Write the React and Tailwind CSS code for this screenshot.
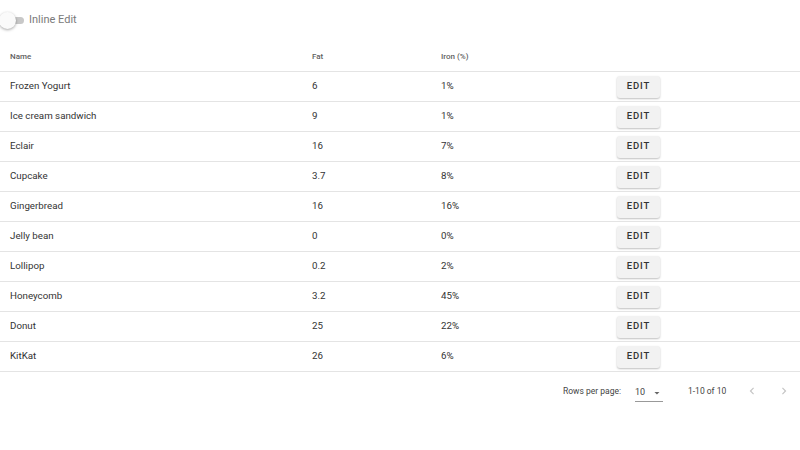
import React, { useState } from "react";

const rows = [
  { name: "Frozen Yogurt", fat: "6", iron: "1%" },
  { name: "Ice cream sandwich", fat: "9", iron: "1%" },
  { name: "Eclair", fat: "16", iron: "7%" },
  { name: "Cupcake", fat: "3.7", iron: "8%" },
  { name: "Gingerbread", fat: "16", iron: "16%" },
  { name: "Jelly bean", fat: "0", iron: "0%" },
  { name: "Lollipop", fat: "0.2", iron: "2%" },
  { name: "Honeycomb", fat: "3.2", iron: "45%" },
  { name: "Donut", fat: "25", iron: "22%" },
  { name: "KitKat", fat: "26", iron: "6%" },
];

const Chevron = ({ dir }) => (
  <svg width="14" height="14" viewBox="0 0 24 24" fill="#c4c4c4">
    {dir === "left" ? (
      <path d="M15.41 7.41 14 6l-6 6 6 6 1.41-1.41L10.83 12z" />
    ) : (
      <path d="M10 6 8.59 7.41 13.17 12l-4.58 4.59L10 18l6-6z" />
    )}
  </svg>
);

export default function App() {
  const [inline, setInline] = useState(false);

  return (
    <div className="w-[800px] h-[450px] bg-white font-['Roboto',sans-serif] text-[#333]">
      {/* toggle */}
      <div className="h-[42px] flex items-center pb-[1px]">
        <button
          onClick={() => setInline(!inline)}
          className="relative w-[27px] h-[18px] flex items-center shrink-0"
        >
          <span className="absolute left-[7px] w-[17px] h-[7px] rounded-full bg-[#c8c8c8]" />
          <span className="absolute left-[-1px] w-[17px] h-[17px] rounded-full bg-[#fafafa] shadow-[0_1px_3px_rgba(0,0,0,0.35)]" />
        </button>
        <span className="ml-[2px] text-[11px] text-[#7a7a7a]">Inline Edit</span>
      </div>

      {/* header */}
      <div className="h-[30px] flex items-center border-b border-[#e4e4e4] text-[8px] font-medium text-[#5f5f5f]">
        <div className="w-[302px] pl-[10px] shrink-0">Name</div>
        <div className="w-[129px] pl-[10px] shrink-0">Fat</div>
        <div className="pl-[10px]">Iron (%)</div>
      </div>

      {rows.map((r) => (
        <div
          key={r.name}
          className="h-[30px] flex items-center border-b border-[#e4e4e4] text-[9.75px]"
        >
          <div className="w-[302px] pl-[10px] shrink-0">{r.name}</div>
          <div className="w-[129px] pl-[10px] shrink-0">{r.fat}</div>
          <div className="w-[186px] pl-[10px] shrink-0">{r.iron}</div>
          <button className="w-[43px] h-[22px] shrink-0 rounded-[3px] bg-[#f2f2f2] shadow-[0_1px_2px_rgba(0,0,0,0.25)] text-[9.5px] font-medium tracking-[0.1em] text-[#333]">
            EDIT
          </button>
        </div>
      ))}

      {/* pagination */}
      <div className="h-[38px] flex items-center text-[8.5px] text-[#444] whitespace-nowrap">
        <span className="ml-[563px] shrink-0">Rows per page:</span>
        <div className="ml-[14px] w-[28px] h-[18px] mt-[4px] flex items-center border-b border-[#999] shrink-0">
          <span className="text-[9px]">10</span>
          <svg className="ml-[6px]" width="12" height="12" viewBox="0 0 24 24" fill="#666">
            <path d="M7 10l5 5 5-5z" />
          </svg>
        </div>
        <span className="ml-[25px] shrink-0">1-10 of 10</span>
        <div className="ml-[19px] flex items-center gap-[18px] shrink-0">
          <Chevron dir="left" />
          <Chevron dir="right" />
        </div>
      </div>
    </div>
  );
}
